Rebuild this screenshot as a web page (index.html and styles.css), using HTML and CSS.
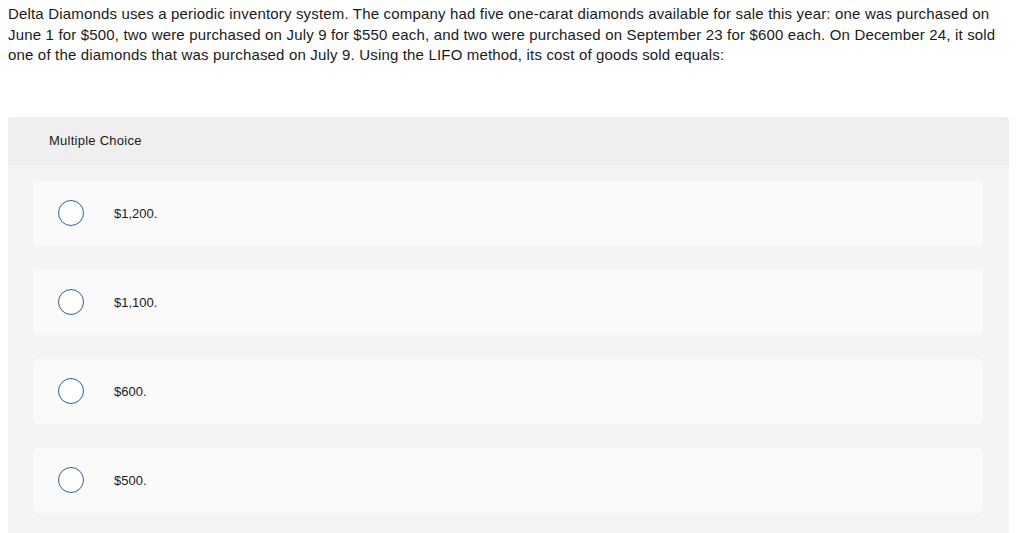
FILE: index.html
```html
<!DOCTYPE html>
<html>
<head>
<meta charset="utf-8">
<link rel="stylesheet" href="styles.css">
</head>
<body>
<p class="question">Delta Diamonds uses a periodic inventory system. The company had five one-carat diamonds available for sale this year: one was purchased on June 1 for $500, two were purchased on July 9 for $550 each, and two were purchased on September 23 for $600 each. On December 24, it sold one of the diamonds that was purchased on July 9. Using the LIFO method, its cost of goods sold equals:</p>
<section class="panel">
  <div class="panel-head">Multiple Choice</div>
  <div class="panel-body">
    <label class="option"><span class="radio"></span><span class="label">$1,200.</span></label>
    <label class="option"><span class="radio"></span><span class="label">$1,100.</span></label>
    <label class="option"><span class="radio"></span><span class="label">$600.</span></label>
    <label class="option"><span class="radio"></span><span class="label">$500.</span></label>
  </div>
</section>
</body>
</html>
```
FILE: styles.css
```css
html, body {
  margin: 0;
  padding: 0;
  background: #fff;
}
body {
  font-family: "Liberation Sans", Arial, sans-serif;
  color: #1a1a1a;
  overflow: hidden;
}
.question {
  margin: 0;
  padding: 4px 2px 0 8px;
  font-size: 15px;
  line-height: 20.5px;
  letter-spacing: 0.17px;
}
.panel {
  margin: 51px 15px 0 8px;
  border-radius: 3px 3px 0 0;
  overflow: hidden;
}
.panel-head {
  background: #efefef;
  height: 48px;
  padding-left: 41px;
  display: flex;
  align-items: center;
  font-size: 13px;
  letter-spacing: 0.25px;
}
.panel-body {
  background: #f4f4f4;
  padding: 16px 26px 30px 25px;
  display: flex;
  flex-direction: column;
  gap: 24px;
}
.option {
  background: #fafafa;
  border-radius: 4px;
  height: 65px;
  display: flex;
  align-items: center;
  padding-left: 25px;
}
.radio {
  width: 24px;
  height: 24px;
  border: 1.4px solid #2f5f96;
  border-radius: 50%;
  background: #fff;
  flex: none;
}
.label {
  margin-left: 30px;
  font-size: 13px;
}
```
